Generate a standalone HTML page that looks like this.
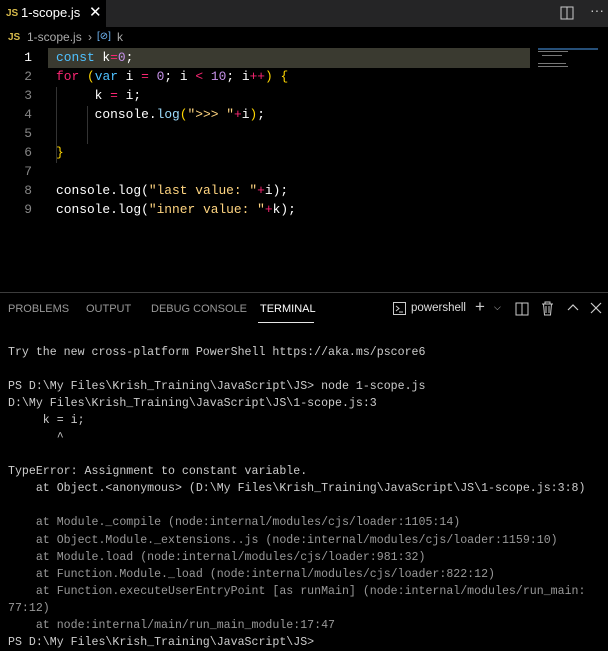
<!DOCTYPE html>
<html><head><meta charset="utf-8"><style>
*{margin:0;padding:0;box-sizing:border-box}
body{width:608px;height:637px;background:#000;overflow:hidden;position:relative;font-family:"Liberation Sans",sans-serif;color:#ccc}
.tabbar{position:absolute;left:0;top:0;width:608px;height:27px;background:#252526}
.tab{position:absolute;left:0;top:0;width:106px;height:27px;background:#000;font-size:13px;color:#fff;white-space:nowrap}
.js{color:#d7ba4a;font-weight:bold;font-size:10px;position:absolute}
.bc{position:absolute;top:30px;left:0;width:300px;height:16px;font-size:12px;color:#aaa;white-space:nowrap}
.code{position:absolute;left:0;top:48px;font-family:"Liberation Mono",monospace;font-size:12.9px;line-height:19px;white-space:pre}
.ln{position:absolute;left:0;width:32px;text-align:right;color:#858585}
.ln.a{color:#fff}
.ct{position:absolute;left:56px;color:#fff}
.kw{color:#4fc1ff}.rd{color:#f92672}.nm{color:#c792ea}.yl{color:#ffd700}.st{color:#ffd580}.fn{color:#9cdcfe}
.panel{position:absolute;left:0;top:292px;width:608px;border-top:1px solid #3c3c3c}
.ptab{position:absolute;top:10px;font-size:11px;color:#999;white-space:nowrap}
.term{position:absolute;left:8px;top:344px;font-family:"Liberation Mono",monospace;font-size:11.6px;line-height:17.05px;white-space:pre;color:#ccc}
</style></head><body>
<div class="tabbar">
 <div class="tab"><span class="js" style="left:6px;top:8px">JS</span><span style="position:absolute;left:21px;top:5px">1-scope.js</span><span style="position:absolute;left:89px;top:3px;font-size:15px">✕</span></div>
 <svg style="position:absolute;left:560px;top:6px" width="14" height="14"><rect x="1" y="1" width="12" height="12" fill="none" stroke="#ccc"/><line x1="7" y1="1" x2="7" y2="13" stroke="#ccc"/></svg>
 <span style="position:absolute;left:590px;top:2px;font-size:14px;color:#ccc">···</span>
</div>
<div class="bc"><span class="js" style="left:8px;top:2px">JS</span><span style="position:absolute;left:27px;top:0">1-scope.js</span><span style="position:absolute;left:88px;top:0">›</span><span style="position:absolute;left:97px;top:1px;color:#75beff;font-size:10px">[⊘]</span><span style="position:absolute;left:117px;top:0">k</span></div>
<div style="position:absolute;left:48px;top:48px;width:482px;height:20px;background:#3a3a30"></div>
<div style="position:absolute;left:538px;top:48px;width:60px;height:2px;background:#264f78"></div>
<div style="position:absolute;left:538px;top:51px;width:30px;height:1px;background:#777"></div>
<div style="position:absolute;left:542px;top:55px;width:20px;height:1px;background:#777"></div>
<div style="position:absolute;left:538px;top:63px;width:28px;height:1px;background:#777"></div>
<div style="position:absolute;left:538px;top:66px;width:30px;height:1px;background:#777"></div>
<div style="position:absolute;left:56px;top:87px;width:1px;height:76px;background:#333"></div>
<div style="position:absolute;left:87px;top:106px;width:1px;height:38px;background:#333"></div>
<div class="code">
<div class="ln a" style="top:0">1</div><div class="ct" style="top:0"><span class="kw">const</span> k<span class="rd">=</span><span class="nm">0</span>;</div>
<div class="ln" style="top:19px">2</div><div class="ct" style="top:19px"><span class="rd">for</span> <span class="yl">(</span><span class="kw">var</span> i <span class="rd">=</span> <span class="nm">0</span>; i <span class="rd">&lt;</span> <span class="nm">10</span>; i<span class="rd">++</span><span class="yl">)</span> <span class="yl">{</span></div>
<div class="ln" style="top:38px">3</div><div class="ct" style="top:38px">     k <span class="rd">=</span> i;</div>
<div class="ln" style="top:57px">4</div><div class="ct" style="top:57px">     console.<span class="fn">log</span><span class="yl">(</span><span class="st">"&gt;&gt;&gt; "</span><span class="rd">+</span>i<span class="yl">)</span>;</div>
<div class="ln" style="top:76px">5</div>
<div class="ln" style="top:95px">6</div><div class="ct" style="top:95px"><span class="yl">}</span></div>
<div class="ln" style="top:114px">7</div>
<div class="ln" style="top:133px">8</div><div class="ct" style="top:133px">console.log(<span class="st">"last value: "</span><span class="rd">+</span>i);</div>
<div class="ln" style="top:152px">9</div><div class="ct" style="top:152px">console.log(<span class="st">"inner value: "</span><span class="rd">+</span>k);</div>
</div>
<div class="panel">
 <span class="ptab" style="left:8px">PROBLEMS</span>
 <span class="ptab" style="left:86px">OUTPUT</span>
 <span class="ptab" style="left:151px">DEBUG CONSOLE</span>
 <span class="ptab" style="left:260px;color:#fff">TERMINAL</span>
 <div style="position:absolute;left:258px;top:29px;width:56px;height:1px;background:#e7e7e7"></div>
 <svg style="position:absolute;left:393px;top:9px" width="13" height="13"><rect x="0.5" y="0.5" width="12" height="12" fill="none" stroke="#ccc"/><path d="M3 4l3 2.5L3 9M6 10h4" stroke="#ccc" fill="none"/></svg>
 <span style="position:absolute;left:411px;top:9px;font-size:11.5px;color:#ddd">powershell</span>
 <span style="position:absolute;left:475px;top:4px;font-size:17px;color:#ccc">+</span>
 <span style="position:absolute;left:494px;top:9px;font-size:9px;color:#ccc">⌵</span>
 <svg style="position:absolute;left:515px;top:9px" width="14" height="14"><rect x="1" y="1" width="12" height="12" fill="none" stroke="#ccc"/><line x1="7" y1="1" x2="7" y2="13" stroke="#ccc"/></svg>
 <svg style="position:absolute;left:541px;top:8px" width="13" height="15"><path d="M1 3h11M4 3V1h5v2M2.5 3l1 11h6l1-11M5 5v7M8 5v7" stroke="#ccc" fill="none"/></svg>
 <svg style="position:absolute;left:567px;top:10px" width="12" height="10"><path d="M1 7l5-5 5 5" stroke="#ccc" fill="none" stroke-width="1.2"/></svg>
 <svg style="position:absolute;left:590px;top:9px" width="12" height="12"><path d="M1 1l10 10M11 1L1 11" stroke="#ccc" stroke-width="1.2"/></svg>
</div>
<div class="term">Try the new cross-platform PowerShell https://aka.ms/pscore6

PS D:\My Files\Krish_Training\JavaScript\JS&gt; node 1-scope.js
D:\My Files\Krish_Training\JavaScript\JS\1-scope.js:3
     k = i;
       ^

TypeError: Assignment to constant variable.
    at Object.&lt;anonymous&gt; (D:\My Files\Krish_Training\JavaScript\JS\1-scope.js:3:8)
<span style="color:#999">
    at Module._compile (node:internal/modules/cjs/loader:1105:14)
    at Object.Module._extensions..js (node:internal/modules/cjs/loader:1159:10)
    at Module.load (node:internal/modules/cjs/loader:981:32)
    at Function.Module._load (node:internal/modules/cjs/loader:822:12)
    at Function.executeUserEntryPoint [as runMain] (node:internal/modules/run_main:
77:12)
    at node:internal/main/run_main_module:17:47</span>
PS D:\My Files\Krish_Training\JavaScript\JS&gt; </div>
</body></html>
